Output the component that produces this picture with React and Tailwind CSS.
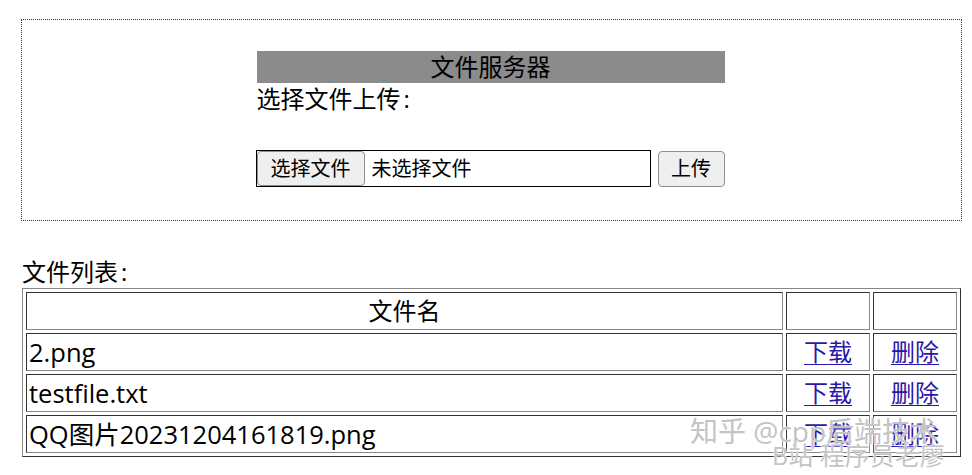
import React from 'react';

const FILES = ['2.png', 'testfile.txt', 'QQ图片20231204161819.png'];

const cellBorder = 'border border-t-[#333] border-l-[#333] border-r-[#888] border-b-[#888] p-0';

const Cell = ({ wide, center, children }) => (
  <td className={cellBorder}>
    <div
      className={`${wide ? 'w-[755px]' : 'w-[82px]'} h-[36px] leading-[36px] whitespace-nowrap ${center ? 'text-center' : 'pl-[2px] text-[25.5px]'}`}
    >
      {children}
    </div>
  </td>
);

const Link = ({ children }) => (
  <a href="#" className="text-[#2a16a8] underline underline-offset-[3px] decoration-1">
    {children}
  </a>
);

export default function App() {
  return (
    <div
      className="relative w-[972px] h-[475px] overflow-hidden bg-white text-black text-[24px] pt-[19px] pl-[21px]"
      style={{ fontFamily: '"Open Sans", "Noto Sans CJK SC", sans-serif' }}
    >
      {/* upload panel */}
      <div className="w-[941px] border border-dotted border-[#333] pt-[31px] pb-[33px]">
        <div className="w-[468px] mx-auto -translate-x-px">
          <div className="h-[32px] leading-[32px] bg-[#8b8b8b] text-center">文件服务器</div>
          <div className="h-[32px] leading-[32px]">选择文件上传<span className="ml-[3px]">:</span></div>
          <div className="mt-[35px] flex items-start -ml-px">
            <div className="w-[396px] h-[37px] border border-black flex items-center">
              <span className="w-[108px] h-[35px] flex items-center justify-center bg-[#efefef] border border-[#8f8f8f] rounded-[4px] text-[20px]">
                选择文件
              </span>
              <span className="ml-[7px] text-[20px]">未选择文件</span>
            </div>
            <button className="ml-[7px] mt-px w-[67px] h-[36px] flex items-center justify-center bg-[#efefef] border border-[#8f8f8f] rounded-[4px] text-[20px]">
              上传
            </button>
          </div>
        </div>
      </div>

      {/* file list */}
      <div className="mt-[35px] h-[32px] leading-[32px] ml-px">文件列表<span className="ml-[3px]">:</span></div>
      <table className="ml-px border-separate border-spacing-[3px] border border-t-[#888] border-l-[#888] border-r-[#333] border-b-[#333]">
        <tbody>
          <tr>
            <Cell wide center>文件名</Cell>
            <Cell />
            <Cell />
          </tr>
          {FILES.map((f) => (
            <tr key={f}>
              <Cell wide>{f}</Cell>
              <Cell center><Link>下载</Link></Cell>
              <Cell center><Link>删除</Link></Cell>
            </tr>
          ))}
        </tbody>
      </table>

      {/* watermark */}
      <div className="absolute left-[690px] top-[414px] text-[28px] leading-[34px] text-[#c4c4c4] whitespace-nowrap [text-shadow:0_0_1px_#fff,0_0_2px_#fff]">
        知乎 @cpp后端技术
      </div>
      <div className="absolute left-[772px] top-[440px] text-[25px] leading-[30px] text-[#c4c4c4] whitespace-nowrap [text-shadow:0_0_1px_#fff,0_0_2px_#fff]">
        B站 程序员老廖
      </div>
    </div>
  );
}
